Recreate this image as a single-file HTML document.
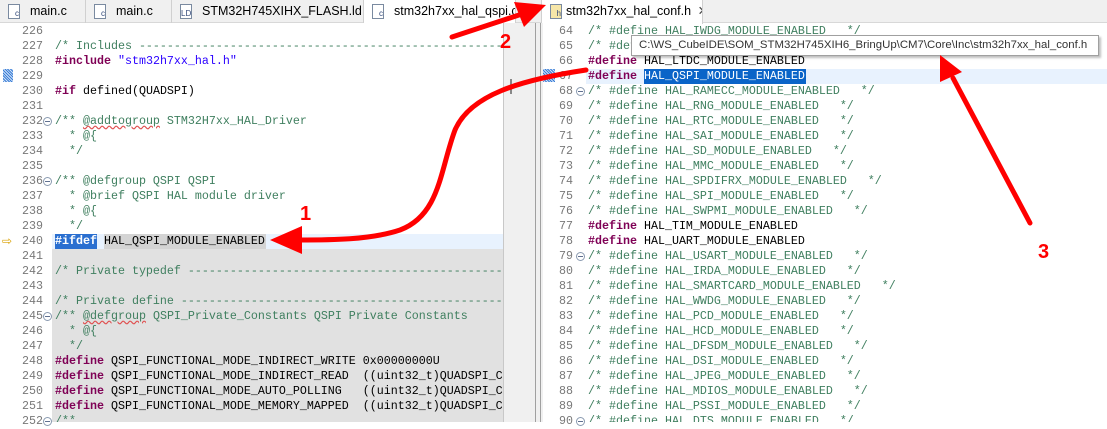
<!DOCTYPE html>
<html><head><meta charset="utf-8"><style>
*{margin:0;padding:0;box-sizing:border-box}
body{width:1107px;height:422px;overflow:hidden;background:#fff;position:relative;font-family:"Liberation Sans",sans-serif}
.tabs{position:absolute;left:0;top:0;width:1107px;height:23px;background:#f0f0f0;border-bottom:1px solid #d8d8d8}
.tab{position:absolute;top:0;height:23px;font-size:12.5px;line-height:22px;color:#000;border-right:1px solid #d0d0d0;padding-left:30px;white-space:nowrap;overflow:hidden}
.tab .ic{position:absolute;left:8px;top:4px;width:12px;height:15px;border:1px solid #7a8aa0;background:#fff;font-size:8px;line-height:8px;color:#33497a;text-align:right;padding-top:5px}
.code{position:absolute;font-family:"Liberation Mono",monospace;font-size:11.67px;line-height:15px;white-space:pre;overflow:hidden}
.ln{position:absolute;text-align:right;color:#787878;font-family:"Liberation Mono",monospace;font-size:11.67px;line-height:15px;white-space:pre}
.k{color:#7f0055;font-weight:bold}
.c{color:#3f7f5f}
.s{color:#2a00ff}
.fold{display:inline-block;width:9px;height:9px;border:1px solid #8a9ab0;border-radius:50%;position:absolute;font-size:0}
.fold::after{content:"";position:absolute;left:1px;top:3px;width:5px;height:1px;background:#607090}
</style></head><body>
<div class="tabs">
 <div class="tab" style="left:0;width:86px"><span class="ic">c</span>main.c</div>
 <div class="tab" style="left:86px;width:86px"><span class="ic">c</span>main.c</div>
 <div class="tab" style="left:172px;width:192px"><span class="ic">LD</span>STM32H745XIHX_FLASH.ld</div>
 <div class="tab" style="left:364px;width:152px;background:#fff"><span class="ic">c</span>stm32h7xx_hal_qspi.c <span style="color:#444">✕</span></div>
 <div class="tab" style="left:541px;width:162px;background:#fff;border-left:1px solid #d0d0d0;height:24px;padding-left:24px"><span class="ic" style="background:#f6e6a8">h</span>stm32h7xx_hal_conf.h <span style="margin-left:3px;color:#444">✕</span></div>
</div>
<div style="position:absolute;left:503px;top:23px;width:40px;height:399px;background:#f0f0f0;border-left:1px solid #c8c8c8"></div>
<div style="position:absolute;left:535px;top:23px;width:1px;height:399px;background:#a0a0a0"></div>
<div style="position:absolute;left:540px;top:23px;width:1px;height:399px;background:#a0a0a0"></div>
<div style="position:absolute;left:510px;top:79px;width:2px;height:15px;background:#888"></div>
<div style="position:absolute;left:52px;top:234px;width:451px;height:15px;background:#e8f2fe"></div>
<div style="position:absolute;left:52px;top:249px;width:451px;height:173px;background:#e1e1e1"></div>
<div style="position:absolute;left:55px;top:234px;width:42px;height:15px;background:#2a6fd0"></div>
<div style="position:absolute;left:104px;top:234px;width:162px;height:15px;background:#d4d4d4"></div>
<div style="position:absolute;left:3px;top:69px;width:10px;height:13px;background:repeating-linear-gradient(45deg,#3b7fd6 0 1px,#cfe0f8 1px 2px)"></div>
<div style="position:absolute;left:2px;top:234px;color:#d9a000;font-size:12px;line-height:15px">⇨</div>
<div class="ln" style="left:0;top:24px;width:43px">226
227
228
229
230
231
232
233
234
235
236
237
238
239
240
241
242
243
244
245
246
247
248
249
250
251
252</div>
<span class="fold" style="left:43px;top:117px"></span>
<span class="fold" style="left:43px;top:177px"></span>
<span class="fold" style="left:43px;top:312px"></span>
<span class="fold" style="left:43px;top:417px"></span>
<div class="code" style="left:55px;top:24px;width:448px;height:398px">
<span class="c">/* Includes ------------------------------------------------------------------*/</span>
<span class="k">#include</span> <span class="s">"stm32h7xx_hal.h"</span>

<span class="k">#if</span> defined(QUADSPI)

<span class="c">/** <u style="text-decoration-color:#e05050;text-decoration-style:wavy">@addtogroup</u> STM32H7xx_HAL_Driver</span>
<span class="c">  * @{</span>
<span class="c">  */</span>

<span class="c">/** @defgroup QSPI QSPI</span>
<span class="c">  * @brief QSPI HAL module driver</span>
<span class="c">  * @{</span>
<span class="c">  */</span>
<span class="k" style="color:#fff">#ifdef</span> HAL_QSPI_MODULE_ENABLED

<span class="c">/* Private typedef -----------------------------------------------------------*/</span>

<span class="c">/* Private define ------------------------------------------------------------*/</span>
<span class="c">/** <u style="text-decoration-color:#e05050;text-decoration-style:wavy">@defgroup</u> QSPI_Private_Constants QSPI Private Constants</span>
<span class="c">  * @{</span>
<span class="c">  */</span>
<span class="k">#define</span> QSPI_FUNCTIONAL_MODE_INDIRECT_WRITE 0x00000000U
<span class="k">#define</span> QSPI_FUNCTIONAL_MODE_INDIRECT_READ  ((uint32_t)QUADSPI_CCR_FMODE_0)
<span class="k">#define</span> QSPI_FUNCTIONAL_MODE_AUTO_POLLING   ((uint32_t)QUADSPI_CCR_FMODE_1)
<span class="k">#define</span> QSPI_FUNCTIONAL_MODE_MEMORY_MAPPED  ((uint32_t)QUADSPI_CCR_FMODE)
<span class="c">/**</span></div>
<div style="position:absolute;left:586px;top:69px;width:521px;height:15px;background:#e8f2fe"></div>
<div style="position:absolute;left:644px;top:69px;width:162px;height:15px;background:#0a64c8"></div>
<div style="position:absolute;left:543px;top:69px;width:12px;height:13px;background:repeating-linear-gradient(45deg,#3b7fd6 0 1px,#cfe0f8 1px 2px)"></div>
<div class="ln" style="left:543px;top:24px;width:30px">64
65
66
67
68
69
70
71
72
73
74
75
76
77
78
79
80
81
82
83
84
85
86
87
88
89
90</div>
<span class="fold" style="left:576px;top:87px"></span>
<span class="fold" style="left:576px;top:252px"></span>
<span class="fold" style="left:576px;top:417px"></span>
<div class="code" style="left:588px;top:24px;width:519px;height:398px"><span class="c">/* #define HAL_IWDG_MODULE_ENABLED   */</span>
<span class="c">/* #define HAL_LPTIM_MODULE_ENABLED   */</span>
<span class="k">#define</span> HAL_LTDC_MODULE_ENABLED
<span class="k">#define</span> <span style="color:#fff">HAL_QSPI_MODULE_ENABLED</span>
<span class="c">/* #define HAL_RAMECC_MODULE_ENABLED   */</span>
<span class="c">/* #define HAL_RNG_MODULE_ENABLED   */</span>
<span class="c">/* #define HAL_RTC_MODULE_ENABLED   */</span>
<span class="c">/* #define HAL_SAI_MODULE_ENABLED   */</span>
<span class="c">/* #define HAL_SD_MODULE_ENABLED   */</span>
<span class="c">/* #define HAL_MMC_MODULE_ENABLED   */</span>
<span class="c">/* #define HAL_SPDIFRX_MODULE_ENABLED   */</span>
<span class="c">/* #define HAL_SPI_MODULE_ENABLED   */</span>
<span class="c">/* #define HAL_SWPMI_MODULE_ENABLED   */</span>
<span class="k">#define</span> HAL_TIM_MODULE_ENABLED
<span class="k">#define</span> HAL_UART_MODULE_ENABLED
<span class="c">/* #define HAL_USART_MODULE_ENABLED   */</span>
<span class="c">/* #define HAL_IRDA_MODULE_ENABLED   */</span>
<span class="c">/* #define HAL_SMARTCARD_MODULE_ENABLED   */</span>
<span class="c">/* #define HAL_WWDG_MODULE_ENABLED   */</span>
<span class="c">/* #define HAL_PCD_MODULE_ENABLED   */</span>
<span class="c">/* #define HAL_HCD_MODULE_ENABLED   */</span>
<span class="c">/* #define HAL_DFSDM_MODULE_ENABLED   */</span>
<span class="c">/* #define HAL_DSI_MODULE_ENABLED   */</span>
<span class="c">/* #define HAL_JPEG_MODULE_ENABLED   */</span>
<span class="c">/* #define HAL_MDIOS_MODULE_ENABLED   */</span>
<span class="c">/* #define HAL_PSSI_MODULE_ENABLED   */</span>
<span class="c">/* #define HAL_DTS_MODULE_ENABLED   */</span></div>
<div style="position:absolute;left:631px;top:35px;width:468px;height:21px;background:#fff;border:1px solid #a0a0a0;box-shadow:2px 2px 2px rgba(0,0,0,.25);font-size:11.4px;line-height:19px;padding-left:7px;color:#333;white-space:nowrap;overflow:hidden">C:\WS_CubeIDE\SOM_STM32H745XIH6_BringUp\CM7\Core\Inc\stm32h7xx_hal_conf.h</div>
<svg width="1107" height="422" style="position:absolute;left:0;top:0" fill="none">
 <path d="M586,70 C520,80 470,95 455,130 C440,170 440,215 400,230 C370,240 330,240 298,240" stroke="#ff0000" stroke-width="5" stroke-linecap="round"/>
 <polygon points="270,240 302,226 302,254" fill="#ff0000"/>
 <path d="M452,37 L522,14" stroke="#ff0000" stroke-width="5" stroke-linecap="round"/>
 <polygon points="546,5 514,2 524,27" fill="#ff0000"/>
 <path d="M1030,223 L953,78" stroke="#ff0000" stroke-width="5" stroke-linecap="round"/>
 <polygon points="940,55 940,82 962,72" fill="#ff0000"/>
 <text x="300" y="220" fill="#ff0000" font-family="Liberation Sans" font-weight="bold" font-size="20">1</text>
 <text x="500" y="48" fill="#ff0000" font-family="Liberation Sans" font-weight="bold" font-size="20">2</text>
 <text x="1038" y="258" fill="#ff0000" font-family="Liberation Sans" font-weight="bold" font-size="20">3</text>
</svg>
</body></html>
